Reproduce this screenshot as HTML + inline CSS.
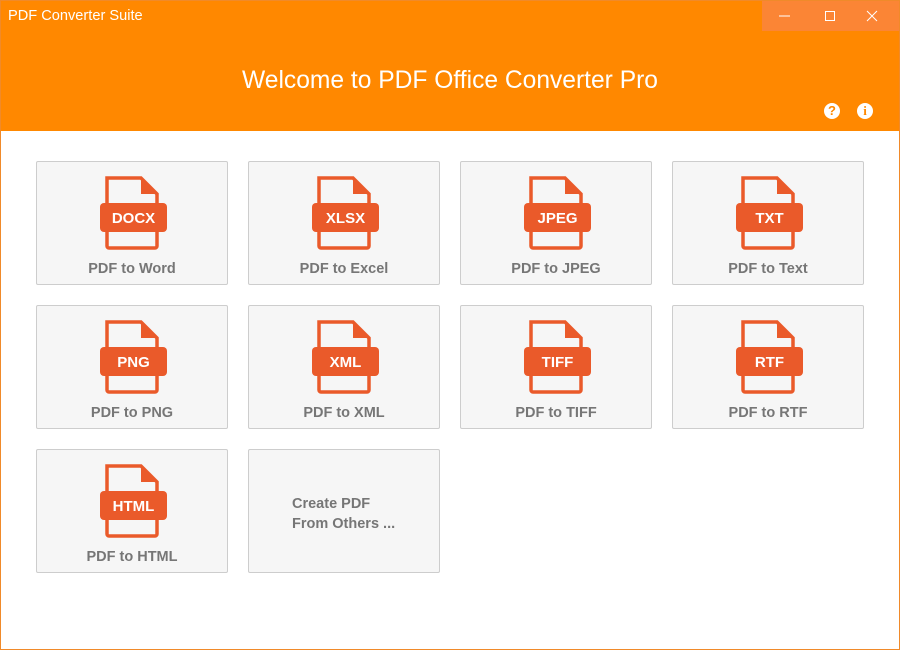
<!DOCTYPE html><html><head><style>
body{margin:0;width:900px;height:650px;overflow:hidden;font-family:"Liberation Sans",sans-serif;background:#fff;position:relative}
.frame{position:absolute;left:0;top:0;width:898px;height:648px;border:1px solid #f08a2a}
.hdr{position:absolute;left:0;top:0;width:900px;height:131px;background:#ff8800}
.tt{position:absolute;left:8px;top:8px;color:#fff;font-size:14.6px}
.btns{position:absolute;left:762px;top:0;width:138px;height:31px;background:#fb8535}
.h1{position:absolute;left:0;width:900px;top:67px;text-align:center;color:#fff;font-size:24.6px}
.card{position:absolute;width:190px;height:122px;border:1px solid #cdcdcd;background:#f6f6f6;border-radius:2px}
.lbl{position:absolute;left:0;width:190px;top:99px;text-align:center;color:#767676;font-weight:bold;font-size:14.5px}
.ic{position:absolute;left:61px;top:13px}
.cr{position:absolute;left:43px;top:44px;color:#767676;font-weight:bold;font-size:14.5px;line-height:20px}
.q{position:absolute;top:103px;width:16px;height:16px;border-radius:50%;background:#fff;color:#ff8800;font-weight:bold;font-size:13px;text-align:center;line-height:16px}
</style></head><body>
<div class="hdr"></div>
<div class="btns"><svg width="138" height="31"><line x1="17" y1="16" x2="28" y2="16" stroke="#fff"/><rect x="63.5" y="11.5" width="9" height="9" fill="none" stroke="#fff"/><path d="M105 11l10 10M115 11l-10 10" stroke="#fff"/></svg></div>
<div class="tt">PDF Converter Suite</div>
<div class="h1">Welcome to PDF Office Converter Pro</div>
<div class="q" style="left:824px">?</div><div class="q" style="left:857px;font-family:'Liberation Serif',serif">i</div>
<div class="frame"></div>
<div id="c"></div>
<script>
var items=[["DOCX","PDF to Word"],["XLSX","PDF to Excel"],["JPEG","PDF to JPEG"],["TXT","PDF to Text"],["PNG","PDF to PNG"],["XML","PDF to XML"],["TIFF","PDF to TIFF"],["RTF","PDF to RTF"],["HTML","PDF to HTML"]];
var h="";
items.forEach(function(it,i){var x=36+212*(i%4),y=161+144*Math.floor(i/4);
h+='<div class="card" style="left:'+x+'px;top:'+y+'px"><svg class="ic" width="70" height="76" viewBox="0 0 70 76"><path d="M9 3H43L59 19V71a2 2 0 0 1-2 2H11a2 2 0 0 1-2-2Z" fill="none" stroke="#ea5a2a" stroke-width="3.5"/><path d="M43 3V19H59Z" fill="#ea5a2a"/><rect x="2" y="28" width="67" height="29" rx="4" fill="#ea5a2a"/><text x="35.5" y="48" text-anchor="middle" font-family="Liberation Sans" font-weight="bold" font-size="15" fill="#fff">'+it[0]+'</text></svg><div class="lbl">'+it[1]+'</div></div>';});
h+='<div class="card" style="left:248px;top:449px"><div class="cr">Create PDF<br>From Others ...</div></div>';
document.getElementById("c").innerHTML=h;
</script>
</body></html>
